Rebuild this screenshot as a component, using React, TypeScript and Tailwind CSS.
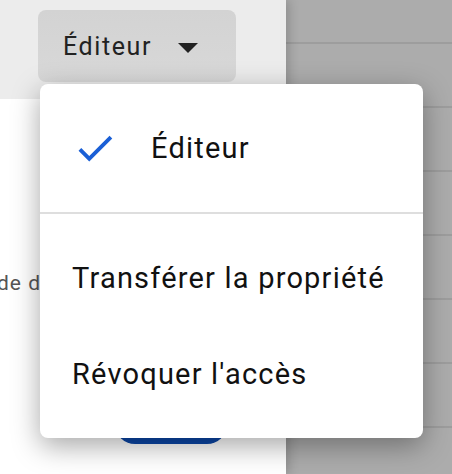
import React from "react"

const rows = [0, 1, 2, 3, 4, 5, 6]

function CheckIcon() {
  return (
    <svg viewBox="0 0 24 24" className="h-[46px] w-[46px] shrink-0" fill="#1a5fd6">
      <path d="M9 16.17L4.83 12l-1.42 1.41L9 19 21 7l-1.41-1.41z" />
    </svg>
  )
}

function Caret() {
  return (
    <svg viewBox="0 0 24 24" className="h-[48px] w-[48px] shrink-0" fill="#222">
      <path d="M7 10l5 5 5-5z" />
    </svg>
  )
}

export default function App() {
  return (
    <div
      className="relative flex h-[474px] w-[452px] overflow-hidden bg-white"
      style={{ fontFamily: "Roboto, 'Noto Sans', sans-serif" }}
    >
      {/* Left panel */}
      <div className="relative z-10 flex w-[286px] shrink-0 flex-col bg-white shadow-[3px_0_10px_rgba(0,0,0,0.18)]">
        <div className="flex h-[99px] items-start bg-[#ececec] pl-[38px] pt-[10px]">
          <button className="flex h-[72px] w-[198px] items-center rounded-lg bg-gradient-to-b from-[#d3d3d3] to-[#d8d8d8] pl-[25px] pt-[2px] text-[25px] tracking-[1.6px] text-[#222]">
            <span>Éditeur</span>
            <span className="ml-[12px] flex">
              <Caret />
            </span>
          </button>
        </div>
        <div className="flex flex-1 flex-col pt-[169px]">
          <p className="-ml-[3px] whitespace-nowrap text-[21px] tracking-[1px] text-[#555]">de diffusion</p>
          <div className="ml-[115px] mt-[104px] h-[40px] w-[112px] rounded-full bg-[#0b47a8]" />
        </div>
      </div>

      {/* Right panel */}
      <div className="flex flex-1 flex-col bg-[#acacac]">
        {rows.map((r) => (
          <div
            key={r}
            className={
              r === 0
                ? "h-[44px] shrink-0 border-b-2 border-[#9d9d9d]"
                : "h-[64px] shrink-0 border-b-2 border-[#9d9d9d]"
            }
          />
        ))}
      </div>

      {/* Role menu */}
      <div className="absolute left-[40px] top-[84px] z-20 w-[383px] rounded-lg bg-white py-4 text-[29px] tracking-[1.2px] text-[#111] shadow-[0_8px_28px_rgba(0,0,0,0.35)]">
        <div className="flex h-[96px] items-center px-8">
          <CheckIcon />
          <span className="ml-[33px] pt-[2px]">Éditeur</span>
        </div>
        <div className="my-4 h-[2px] bg-[#dedede]" />
        <div className="flex h-[96px] items-center px-8 pt-[2px]">Transférer la propriété</div>
        <div className="flex h-[96px] items-center px-8 pt-[2px]">Révoquer l'accès</div>
      </div>
    </div>
  )
}
